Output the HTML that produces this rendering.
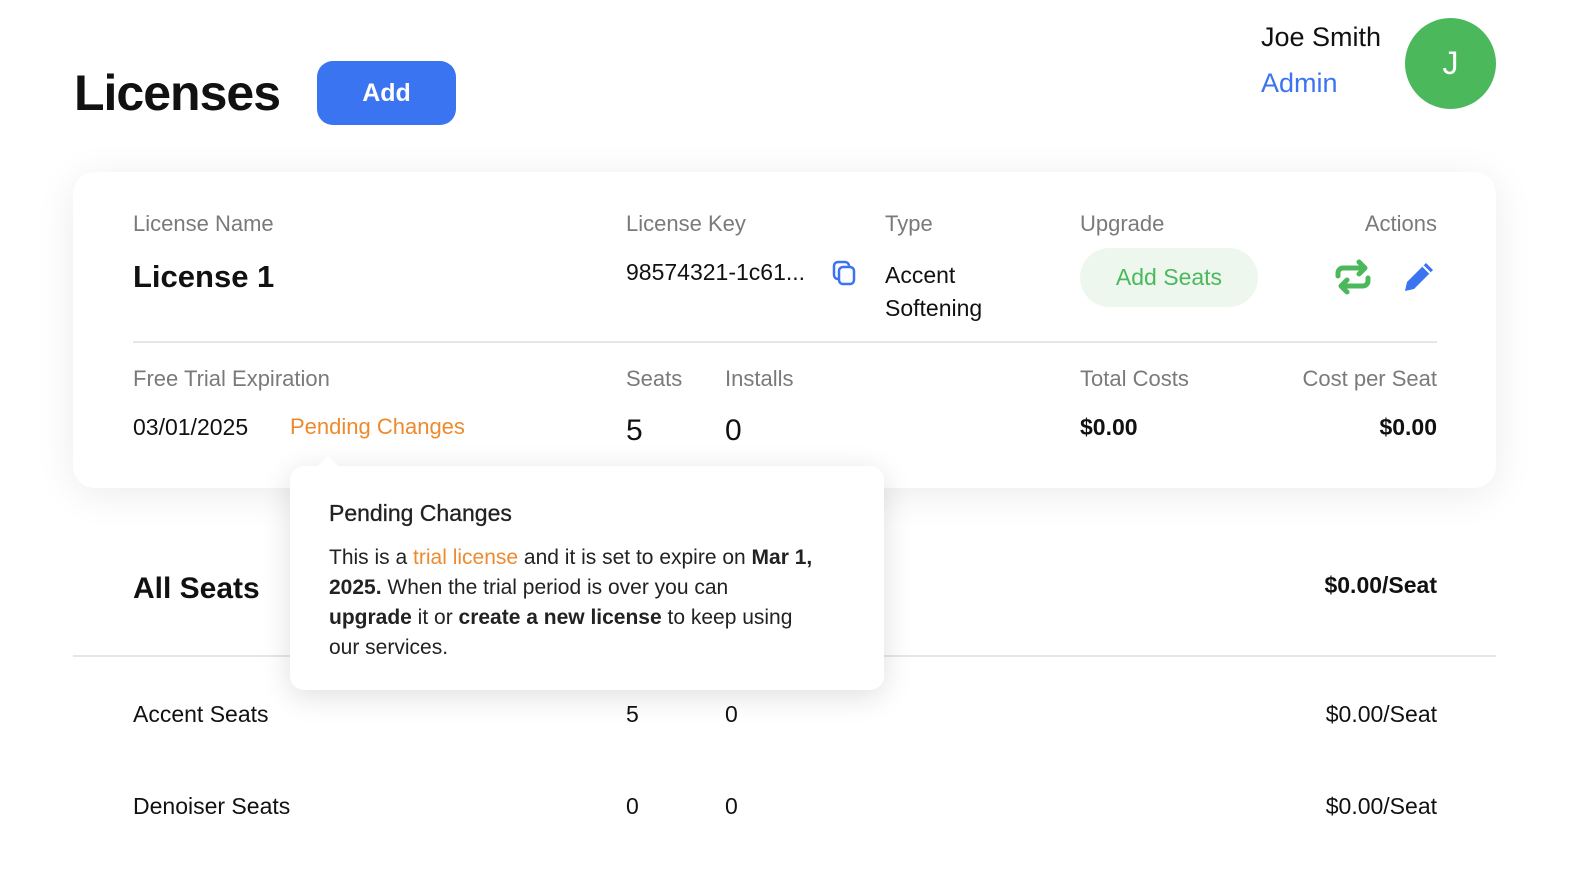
<!DOCTYPE html>
<html><head><meta charset="utf-8"><style>
*{margin:0;padding:0;box-sizing:border-box}
body{width:1582px;height:886px;background:#fff;font-family:"Liberation Sans",sans-serif;color:#111;position:relative;overflow:hidden}
.a{position:absolute;white-space:nowrap}
.lbl{font-size:22px;color:#7a7a7a}
.val{font-size:23px;color:#111}
</style></head><body>
<div class="a" style="left:74px;top:64px;font-size:50px;font-weight:bold;letter-spacing:-1px">Licenses</div>
<div class="a" style="left:317px;top:61px;width:139px;height:64px;background:#3b74f0;border-radius:16px;color:#fff;font-size:25px;font-weight:bold;text-align:center;line-height:64px">Add</div>
<div class="a" style="left:1261px;top:22px;font-size:27px;color:#111">Joe Smith</div>
<div class="a" style="left:1261px;top:68px;font-size:27px;color:#3b74f0">Admin</div>
<div class="a" style="left:1405px;top:18px;width:91px;height:91px;border-radius:50%;background:#4cb85c;color:#fff;font-size:32px;text-align:center;line-height:91px">J</div>

<div class="a" style="left:73px;top:172px;width:1423px;height:316px;border-radius:22px;background:#fff;box-shadow:0 6px 40px rgba(0,0,0,0.08)"></div>
<div class="a lbl" style="left:133px;top:211px">License Name</div>
<div class="a" style="left:133px;top:259px;font-size:31px;font-weight:bold">License 1</div>
<div class="a lbl" style="left:626px;top:211px">License Key</div>
<div class="a val" style="left:626px;top:259px">98574321-1c61...</div>
<svg class="a" style="left:832px;top:260px" width="26" height="26" viewBox="0 0 26 26"><rect x="2" y="2" width="15" height="17" rx="4" fill="none" stroke="#3b74f0" stroke-width="2.5"/><rect x="7" y="7" width="15" height="17" rx="4" fill="#fff" stroke="#3b74f0" stroke-width="2.5"/></svg>
<div class="a lbl" style="left:885px;top:211px">Type</div>
<div class="a val" style="left:885px;top:259px;line-height:33px">Accent<br>Softening</div>
<div class="a lbl" style="left:1080px;top:211px">Upgrade</div>
<div class="a" style="left:1080px;top:248px;width:178px;height:59px;border-radius:30px;background:#edf7ee;color:#4cb85c;font-size:23px;text-align:center;line-height:59px">Add Seats</div>
<div class="a lbl" style="right:145px;top:211px">Actions</div>
<svg class="a" style="left:1334px;top:258px" width="38" height="38" viewBox="0 0 38 38" fill="none" stroke="#4cb85c" stroke-width="5" stroke-linecap="round" stroke-linejoin="round"><path d="M4 18v-3a5 5 0 0 1 5-5h21"/><path d="M25 4l6 6-6 6" /><path d="M34 20v3a5 5 0 0 1-5 5H8"/><path d="M13 22l-6 6 6 6"/></svg>
<svg class="a" style="left:1402px;top:260px" width="34" height="34" viewBox="0 0 34 34"><path d="M3 31l2-9L24 3l7 7L12 29z" fill="#3b74f0"/><path d="M21 6l7 7" stroke="#fff" stroke-width="2"/></svg>

<div class="a" style="left:133px;top:341px;width:1304px;height:2px;background:#e6e6e6"></div>
<div class="a lbl" style="left:133px;top:366px">Free Trial Expiration</div>
<div class="a val" style="left:133px;top:414px">03/01/2025</div>
<div class="a" style="left:290px;top:414px;font-size:22px;color:#ef8a2c">Pending Changes</div>
<div class="a lbl" style="left:626px;top:366px">Seats</div>
<div class="a" style="left:626px;top:414px;font-size:30px">5</div>
<div class="a lbl" style="left:725px;top:366px">Installs</div>
<div class="a" style="left:725px;top:414px;font-size:30px">0</div>
<div class="a lbl" style="left:1080px;top:366px">Total Costs</div>
<div class="a val" style="left:1080px;top:414px;font-weight:bold">$0.00</div>
<div class="a lbl" style="right:145px;top:366px">Cost per Seat</div>
<div class="a val" style="right:145px;top:414px;font-weight:bold">$0.00</div>

<div class="a" style="left:133px;top:572px;font-size:30px;font-weight:bold">All Seats</div>
<div class="a" style="right:145px;top:572px;font-size:23px;font-weight:bold">$0.00/Seat</div>
<div class="a" style="left:73px;top:655px;width:1423px;height:2px;background:#e6e6e6"></div>
<div class="a val" style="left:133px;top:701px">Accent Seats</div>
<div class="a val" style="left:626px;top:701px">5</div>
<div class="a val" style="left:725px;top:701px">0</div>
<div class="a val" style="right:145px;top:701px">$0.00/Seat</div>
<div class="a val" style="left:133px;top:793px">Denoiser Seats</div>
<div class="a val" style="left:626px;top:793px">0</div>
<div class="a val" style="left:725px;top:793px">0</div>
<div class="a val" style="right:145px;top:793px">$0.00/Seat</div>

<div class="a" style="left:290px;top:466px;width:594px;height:224px;border-radius:14px;background:#fff;box-shadow:0 6px 30px rgba(0,0,0,0.13)"></div>
<div class="a" style="left:317px;top:455px;width:0;height:0;border-left:11px solid transparent;border-right:11px solid transparent;border-bottom:12px solid #fff"></div>
<div class="a" style="left:329px;top:500px;font-size:23px;color:#222;-webkit-text-stroke:0.3px #222">Pending Changes</div>
<div class="a" style="left:329px;top:543px;font-size:21px;line-height:30px;color:#222">This is a <span style="color:#ef8a2c">trial license</span> and it is set to expire on <b>Mar 1,</b><br><b>2025.</b> When the trial period is over you can<br><b>upgrade</b> it or <b>create a new license</b> to keep using<br>our services.</div>
</body></html>
